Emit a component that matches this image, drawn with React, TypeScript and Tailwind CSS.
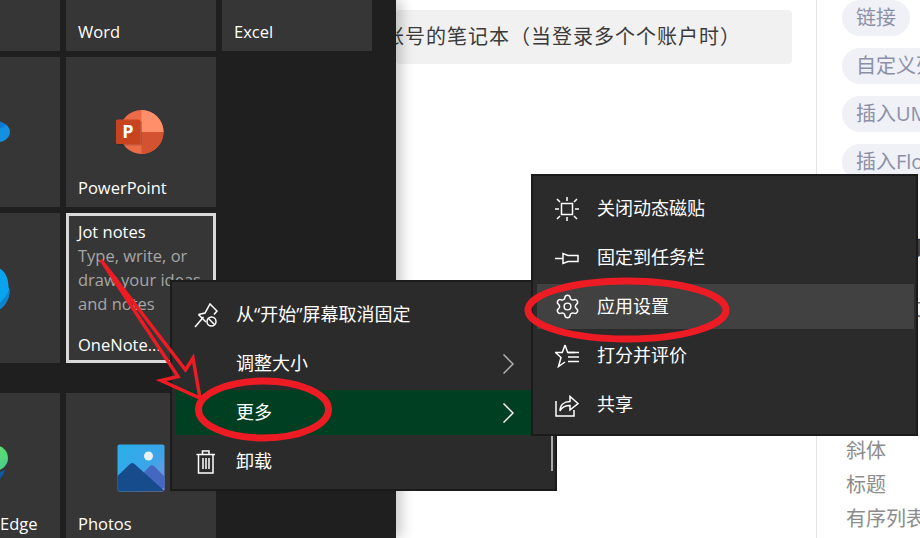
import type { ReactNode } from 'react';
import { Settings } from 'lucide-react';

const cjk = "font-['Open_Sans','Noto_Sans_CJK_SC',sans-serif]";

function Tile({ label, icon, inset }: { label?: string; icon?: ReactNode; inset?: string }) {
  return (
    <div className="grid h-[150px] bg-[#363636] text-white">
      <div className="[grid-area:1/1] flex items-center justify-center">{icon}</div>
      {label && (
        <div className={`[grid-area:1/1] self-end pb-[7px] text-[16.5px] leading-6 whitespace-nowrap ${inset ?? 'pl-3'}`}>
          {label}
        </div>
      )}
    </div>
  );
}

function PowerPointIcon() {
  return (
    <svg width="48" height="48" viewBox="0 0 48 48" className="overflow-visible">
      <circle cx="24.500" cy="24" r="22" fill="#ed6c47" />
      <path d="M24.500 2a22 22 0 0 1 22 22h-22z" fill="#ff8f6b" />
      <path d="M24.500 46a22 22 0 0 0 22-22h-22z" fill="#d35230" />
      <rect x="1" y="13" width="24" height="24.500" rx="1.500" fill="#000" opacity="0.18" />
      <rect x="-1" y="11.500" width="24" height="24.500" rx="1.500" fill="#c8441f" />
      <text x="11" y="30" textAnchor="middle" fill="#fff" fontSize="18" fontWeight="700" fontFamily="Open Sans, sans-serif">
        P
      </text>
    </svg>
  );
}

function PhotosIcon() {
  return (
    <svg width="48" height="48" viewBox="0 0 48 48">
      <defs>
        <linearGradient id="sky" x1="0" y1="0" x2="1" y2="1">
          <stop offset="0" stopColor="#28afea" />
          <stop offset="0.55" stopColor="#3ca5e8" />
          <stop offset="1" stopColor="#8a8fe0" />
        </linearGradient>
      </defs>
      <rect x="0.500" y="0.500" width="47" height="47" rx="2" fill="url(#sky)" />
      <circle cx="31.500" cy="12" r="4.500" fill="#e9f1f8" />
      <path d="M27 28l6-6a3 3 0 0 1 4 0l10.500 10.500V44L40 46H32z" fill="#4467c0" />
      <path d="M0.500 32L13 20a3.500 3.500 0 0 1 4.500 0L47.500 47H2.500a2 2 0 0 1-2-2z" fill="#164b8c" />
    </svg>
  );
}

function BlobIcon() {
  return (
    <svg width="50" height="50" viewBox="0 0 50 50" className="overflow-visible">
      <ellipse cx="36" cy="25" rx="14" ry="10.500" fill="#1490df" />
      <path d="M30 15a14 10.500 0 0 1 16 3L30 28z" fill="#0f78d4" />
    </svg>
  );
}

function CloudIcon() {
  return (
    <svg width="50" height="50" viewBox="0 0 50 50" className="overflow-visible">
      <path d="M20 5H38C45 7 48.500 15 48.500 24C50 27 50 32 47 38C43 46 36 50 28 50H20z" fill="#0aa3ee" />
      <path d="M49 27C50 30 49.500 34 47 38C43 46 36 50 28 50H20V47C32 47 44 40 49 27z" fill="#0d84cc" />
    </svg>
  );
}

function EdgeIcon() {
  return (
    <svg width="50" height="50" viewBox="0 0 50 50" className="overflow-visible">
      <defs>
        <linearGradient id="edge" x1="0" y1="0" x2="0.600" y2="1">
          <stop offset="0" stopColor="#6fe35f" />
          <stop offset="1" stopColor="#4ad08a" />
        </linearGradient>
      </defs>
      <ellipse cx="34" cy="15" rx="14" ry="13" fill="url(#edge)" />
      <path d="M20 30C30 31 40 30 45 27C43 33 39 38 34 42L20 44z" fill="#0c59a4" />
    </svg>
  );
}

function StartPanel() {
  return (
    <div className="relative z-10 h-[538px] w-[396px] shrink-0 overflow-hidden bg-[#1f1f1f] shadow-[6px_0_12px_rgba(0,0,0,0.2)] font-['Open_Sans',sans-serif]">
      <div className="-ml-[90px] -mt-[99px] grid grid-cols-[150px_150px_150px] gap-[6px]">
        <Tile />
        <Tile label="Word" />
        <Tile label="Excel" />
        <Tile icon={<BlobIcon />} />
        <Tile label="PowerPoint" icon={<PowerPointIcon />} />
        <div />
        <Tile icon={<CloudIcon />} />
        <div className="flex h-[150px] flex-col border-[3px] border-[#d9d9d9] bg-[#363636] px-[9px] pt-1 pb-[3px] text-[16.5px] leading-6 whitespace-nowrap">
          <div className="text-white">Jot notes</div>
          <div className="text-[#a6a6a6]">Type, write, or</div>
          <div className="text-[#a6a6a6]">draw your ideas</div>
          <div className="text-[#a6a6a6]">and notes</div>
          <div className="mt-auto text-white">OneNote...</div>
        </div>
      </div>
      <div className="ml-[-90px] mt-[30px] grid grid-cols-[150px_150px_150px] gap-[6px]">
        <Tile label="Microsoft Edge" inset="pl-[13px]" icon={<EdgeIcon />} />
        <Tile label="Photos" icon={<PhotosIcon />} />
      </div>
    </div>
  );
}

const UnpinIcon = (
  <svg width="24" height="26" viewBox="0 0 24 26" fill="none" stroke="currentColor" strokeWidth="1.500">
    <path d="M1 25l8.500-10" />
    <path d="M4.500 12.500l6.500-1.500 5-9 7 7-3 3.500" />
    <path d="M4.500 12.500l7.500 7.500" />
    <circle cx="17.500" cy="19.500" r="4.500" />
    <path d="M14.500 16.500l6 6" />
  </svg>
);

const TrashIcon = (
  <svg width="24" height="24" viewBox="0 0 24 24" fill="none" stroke="currentColor" strokeWidth="1.500">
    <path d="M2.500 4.500h18.500" />
    <path d="M8.500 4.500V1h6.500v3.500" />
    <path d="M4.500 4.500V23h14.500V4.500" />
    <path d="M9 8v11M12 8v11M15 8v11" />
  </svg>
);

const SunIcon = (
  <svg width="24" height="24" viewBox="0 0 24 24" fill="none" stroke="currentColor" strokeWidth="1.500">
    <rect x="6.500" y="6.500" width="11" height="11" />
    <path d="M12 0v4M12 20v4M0 12h4M20 12h4M2 2l3 3M19 19l3 3M22 2l-3 3M5 19l-3 3" />
  </svg>
);

const PinIcon = (
  <svg width="24" height="24" viewBox="0 0 24 24" fill="none" stroke="currentColor" strokeWidth="1.500">
    <path d="M0 12.500h8" />
    <path d="M8 7.500v10l5-2h10v-6H13z" />
  </svg>
);

const StarIcon = (
  <svg width="24" height="24" viewBox="0 0 24 24" fill="none" stroke="currentColor" strokeWidth="1.500">
    <path d="M10 1l2.700 7.500H20M10 1L7.300 8.500H0.500l5.500 5-2.500 9 6.500-4.500" />
    <path d="M13 13h11M13 17.500h11M13 8.500h11" />
  </svg>
);

const ShareIcon = (
  <svg width="24" height="24" viewBox="0 0 24 24" fill="none" stroke="currentColor" strokeWidth="1.500">
    <path d="M1 8v15h18v-6" />
    <path d="M5 18c0-6 4-9.500 10-9.500V3.500l8 7-8 6.500v-4.500c-4.500 0-8 1.500-10 5.500z" />
  </svg>
);

function Chevron({ color }: { color: string }) {
  return (
    <svg width="11" height="20" viewBox="0 0 11 20" fill="none" stroke={color} strokeWidth="1.500">
      <path d="M0.500 0.500L10 10 0.500 19.500" />
    </svg>
  );
}

function MenuRow({ icon, label, chevron, bg }: { icon?: ReactNode; label: string; chevron?: string; bg?: string }) {
  return (
    <div className={`flex h-[45px] items-center text-[18px] leading-none text-white ${bg ?? ''}`}>
      <div className="flex w-[60px] shrink-0 items-center justify-center">{icon}</div>
      <div className="flex-1 pb-[2px] whitespace-nowrap">{label}</div>
      {chevron && (
        <div className="mr-9 flex">
          <Chevron color={chevron} />
        </div>
      )}
    </div>
  );
}

function TileMenu() {
  return (
    <div className={`absolute left-[170px] top-[280px] z-20 flex h-[211px] w-[387px] flex-col gap-1 border-2 border-[#1b1b1b] bg-[#2b2b2b] pt-[10px] pl-1 pr-[5px] ${cjk}`}>
      <MenuRow icon={UnpinIcon} label="从“开始”屏幕取消固定" />
      <MenuRow label="调整大小" chevron="#b5b5b5" />
      <MenuRow label="更多" chevron="#ffffff" bg="bg-[#013f22]" />
      <MenuRow icon={TrashIcon} label="卸载" />
      <div className="absolute left-[379px] top-[110px] h-[79px] w-[2px] bg-[#a8a8a8]" />
    </div>
  );
}

function MoreMenu() {
  return (
    <div className={`absolute left-[531px] top-[174px] z-30 flex h-[262px] w-[387px] flex-col gap-1 border-2 border-[#1b1b1b] bg-[#2b2b2b] pt-[10px] pl-1 pr-[2px] ${cjk}`}>
      <MenuRow icon={SunIcon} label="关闭动态磁贴" />
      <MenuRow icon={PinIcon} label="固定到任务栏" />
      <MenuRow icon={<Settings size={27} strokeWidth={1.3} />} label="应用设置" bg="bg-[#414141]" />
      <MenuRow icon={StarIcon} label="打分并评价" />
      <MenuRow icon={ShareIcon} label="共享" />
    </div>
  );
}

function Annotations() {
  return (
    <svg className="absolute inset-0 z-40" width="920" height="538" viewBox="0 0 920 538" fill="none" stroke="#ed1c24">
      <ellipse cx="263.500" cy="409.500" rx="65" ry="28.500" strokeWidth="7" />
      <ellipse cx="627" cy="310" rx="99" ry="29" strokeWidth="7" />
      <path d="M101 260L178 376.500 161 380.500 200 398 193 358 185.500 370z" strokeWidth="3.500" strokeLinejoin="miter" />
    </svg>
  );
}

const chips = ['链接', '自定义列表', '插入UML', '插入Flow'];
const rows = ['斜体', '标题', '有序列表'];

export default function App() {
  return (
    <div className={`relative flex h-[538px] w-[920px] overflow-hidden bg-white ${cjk}`}>
      <StartPanel />
      <main className="flex-1">
        <div className="mt-[10px] mr-6 flex h-[54px] items-center rounded bg-[#f1f1f1] text-[20px] tracking-[1px] whitespace-nowrap text-[#3a3a3a]">
          <span className="-ml-3">账号的笔记本（当登录多个个账户时）</span>
        </div>
      </main>
      <aside className="w-[104px] shrink-0 overflow-hidden border-l border-[#e4e4e4] pl-[25px] text-[20px]">
        <div className="flex flex-col items-start gap-3">
          {chips.map((chip) => (
            <div key={chip} className="flex h-9 shrink-0 items-center rounded-full bg-[#eff1f7] px-[14px] whitespace-nowrap text-[#8b90a8]">
              {chip}
            </div>
          ))}
        </div>
        <div className="mt-[56px] h-6 font-bold leading-6 whitespace-nowrap text-[#444444]">插入常用语法</div>
        <div className="mt-[34px] h-[34px] whitespace-nowrap text-[#8c8c8c]">删除线文本内容</div>
        <div className="ml-1 mt-[106px] flex flex-col text-[#8c8c8c]">
          {rows.map((row) => (
            <div key={row} className="flex h-[34px] items-center whitespace-nowrap">
              {row}
            </div>
          ))}
        </div>
      </aside>
      <TileMenu />
      <MoreMenu />
      <Annotations />
    </div>
  );
}
